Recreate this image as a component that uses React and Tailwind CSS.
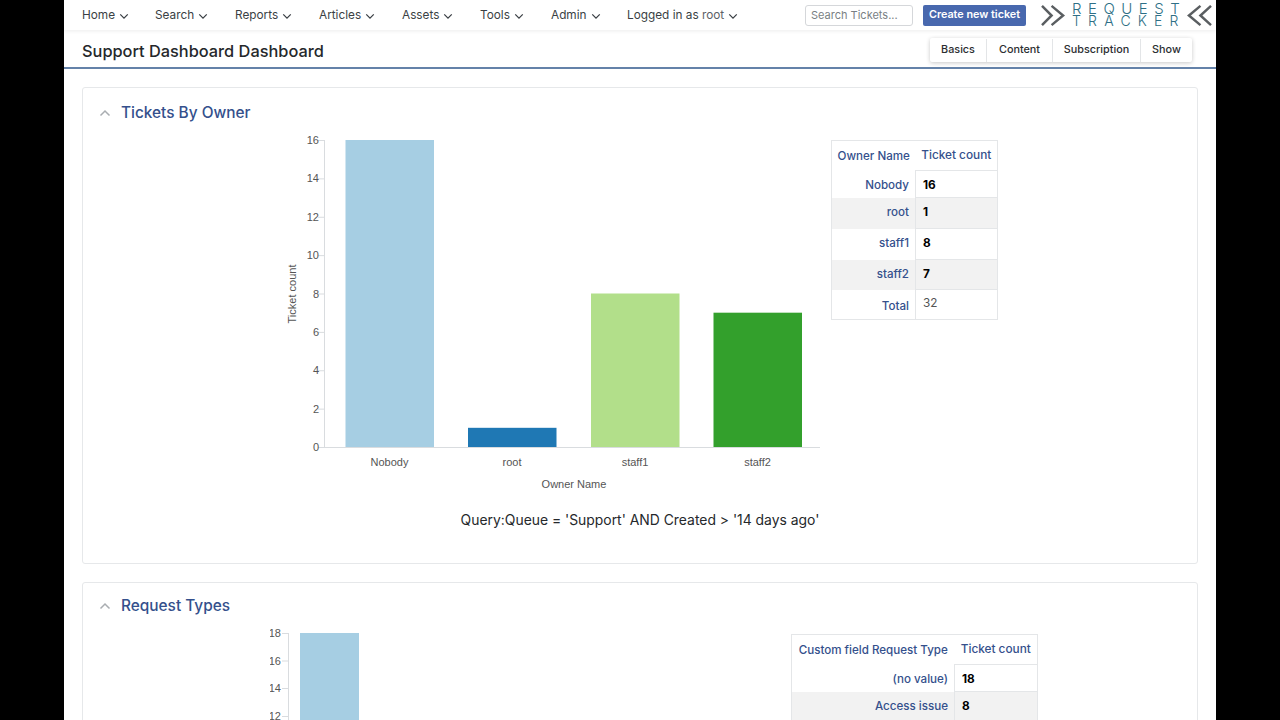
import React from "react";

const Chevron = ({ up, className }) => (
  <svg viewBox="0 0 12 8" className={className} fill="none" stroke="currentColor" strokeWidth="1.5">
    <path d={up ? "M1.5 6.5 6 2l4.5 4.5" : "M1.5 1.5 6 6l4.5-4.5"} />
  </svg>
);

const NAV = [
  ["Home", "w-[73px]"],
  ["Search", "w-[80px]"],
  ["Reports", "w-[84px]"],
  ["Articles", "w-[83px]"],
  ["Assets", "w-[78px]"],
  ["Tools", "w-[71px]"],
  ["Admin", "w-[76px]"],
];

const Logo = () => (
  <div className="flex items-center gap-[6px] ml-[15px] h-[30px]">
    <svg viewBox="0 0 26 24" className="w-[25px] h-[23px]" fill="none" stroke="#5a5e61" strokeWidth="2.6">
      <path d="M1 2l10 10L1 22M11 2l12 10-12 10" />
    </svg>
    <div className="flex flex-col text-[#2e6f86] leading-none font-light">
      <span className="text-[15px] h-[12px] leading-[12px] tracking-[6.5px] whitespace-nowrap">REQUEST</span>
      <span className="text-[14px] h-[12px] leading-[12px] tracking-[7.2px] whitespace-nowrap">TRACKER</span>
    </div>
    <svg viewBox="0 0 26 24" className="w-[25px] h-[23px] -ml-[5px]" fill="none" stroke="#5a5e61" strokeWidth="2.6">
      <path d="M14 2L2 12l12 10M25 2L14 12l11 10" />
    </svg>
  </div>
);

const TICK = "#d9dcdf";

function OwnerChart() {
  const ticks = [0, 2, 4, 6, 8, 10, 12, 14, 16];
  const y0 = 317, h = 307;
  const bars = [
    ["Nobody", 16, "#a6cee3", 65.5],
    ["root", 1, "#1f78b4", 188],
    ["staff1", 8, "#b2df8a", 311],
    ["staff2", 7, "#33a02c", 433.5],
  ];
  return (
    <svg width="550" height="370" viewBox="0 0 550 370" className="block shrink-0" fontFamily="'Liberation Sans', sans-serif">
      <line x1="44.5" y1="10" x2="44.5" y2={y0} stroke={TICK} />
      <line x1="38" y1={y0 + 0.5} x2="540" y2={y0 + 0.5} stroke={TICK} />
      {ticks.map((t) => {
        const y = y0 - (t / 16) * h;
        return (
          <g key={t}>
            <line x1="38" x2="44" y1={y + 0.5} y2={y + 0.5} stroke={TICK} />
            <text x="39" y={y + 4} textAnchor="end" fontSize="11" fill="#555">{t}</text>
          </g>
        );
      })}
      {bars.map(([n, v, c, x]) => (
        <g key={n}>
          <rect x={x} y={y0 - (v / 16) * h} width="88.5" height={(v / 16) * h} fill={c} />
          <text x={x + 44} y="336" textAnchor="middle" fontSize="11" fill="#555">{n}</text>
        </g>
      ))}
      <text x="294" y="358" textAnchor="middle" fontSize="11" fill="#555">Owner Name</text>
      <text transform="translate(16 164) rotate(-90)" textAnchor="middle" fontSize="11" fill="#555">Ticket count</text>
    </svg>
  );
}

function TypesChart() {
  const rows = [[18, 11], [16, 38.5], [14, 66], [12, 94]];
  return (
    <svg width="120" height="102" viewBox="0 0 120 102" className="block shrink-0" fontFamily="'Liberation Sans', sans-serif">
      <line x1="18.5" y1="11" x2="18.5" y2="102" stroke={TICK} />
      {rows.map(([t, y]) => (
        <g key={t}>
          <line x1="12" x2="18" y1={y + 0.5} y2={y + 0.5} stroke={TICK} />
          <text x="11" y={y + 4} textAnchor="end" fontSize="11" fill="#555">{t}</text>
        </g>
      ))}
      <rect x="30" y="11" width="59" height="91" fill="#a6cee3" />
    </svg>
  );
}

const CELL = "border border-[#e4e6e8]";
const LABEL = "text-[#34508c] font-medium text-right align-middle pr-[6px] pl-[6px] text-[11.6px]";

function DataTable({ firstHead, rows, total, col1, col2, heights }) {
  return (
    <table className="border-collapse table-fixed text-[12px] shrink-0" style={{ width: col1 + col2 }}>
      <colgroup>
        <col style={{ width: col1 }} />
        <col style={{ width: col2 }} />
      </colgroup>
      <tbody>
        <tr className="h-[30px]">
          <th className={`${CELL} border-b-0 border-r-0 text-[#34508c] font-medium text-center text-[11.6px] whitespace-nowrap pt-[2px]`}>{firstHead}</th>
          <th className={`${CELL} border-l-0 text-[#34508c] font-medium text-center text-[11.8px] whitespace-nowrap`}>Ticket count</th>
        </tr>
        {rows.map(([k, v], i) => (
          <tr key={k} className={i % 2 ? "bg-[#f2f2f2]" : ""} style={{ height: heights[i] }}>
            <td className={`${CELL} border-y-0 ${LABEL} ${i === 0 ? "pt-[4px]" : ""}`}>{k}</td>
            <td className={`${CELL} pl-[7px] font-bold text-black text-[11.8px] ${i === 0 ? "pt-[3px]" : ""}`}>{v}</td>
          </tr>
        ))}
        {total !== undefined && (
          <tr className="h-[30px]">
            <td className={`${CELL} border-t-0 ${LABEL} pt-[5px]`}>Total</td>
            <td className={`${CELL} pl-[7px] text-[#555] text-[11.8px] pb-[1px]`}>{total}</td>
          </tr>
        )}
      </tbody>
    </table>
  );
}

const CardHead = ({ title }) => (
  <div className="flex items-center h-[24px]">
    <Chevron up className="w-[12px] h-[8px] text-[#a9adb1] ml-[16px]" />
    <h2 className="ml-[10px] text-[15.4px] font-medium text-[#34508c] leading-none">{title}</h2>
  </div>
);

export default function App() {
  return (
    <div className="w-[1280px] h-[720px] overflow-hidden bg-black flex justify-center font-['Inter','Liberation_Sans',sans-serif]">
      <div className="w-[1152px] h-[720px] bg-white overflow-hidden flex flex-col">
        <header className="h-[30px] shrink-0 flex items-center pl-[18px] pr-[3px] text-[#3a3f44] text-[11.8px] shadow-[0_1px_4px_rgba(0,0,0,0.08)] relative">
          {NAV.map(([n, w]) => (
            <div key={n} className={`${w} flex items-center gap-[4px] pt-[2px]`}>
              <span>{n}</span>
              <Chevron className="w-[10px] h-[7px] mt-[1px]" />
            </div>
          ))}
          <div className="flex items-center gap-[4px] w-[178px] pt-[2px]">
            <span>Logged in as <span className="text-[#5c6166]">root</span></span>
            <Chevron className="w-[10px] h-[7px] mt-[1px]" />
          </div>
          <input readOnly placeholder="Search Tickets..." className="w-[108px] h-[21px] border border-[#d5d7da] rounded-[3px] px-[5px] text-[11px] text-[#555] placeholder:text-[#7a7f84] outline-none" />
          <button className="ml-[10px] w-[103px] h-[21px] bg-[#4868ae] text-white text-[10.8px] font-semibold rounded-[2px] whitespace-nowrap">Create new ticket</button>
          <Logo />
        </header>

        <div className="h-[39px] shrink-0 flex items-center justify-between pl-[18px] pr-[24px] border-b-2 border-[#6482a9]">
          <h1 className="text-[16.35px] font-medium text-[#25282b] leading-none mt-[5px]">Support Dashboard Dashboard</h1>
          <div className="flex h-[24px] pt-[1px] rounded-[2px] shadow-[0_1px_4px_rgba(0,0,0,0.22)] text-[10.8px] font-medium text-[#2b2e31] mt-[3px]">
            <span className="w-[57px] flex items-center justify-center border-r border-[#e3e5e7]">Basics</span>
            <span className="w-[66px] flex items-center justify-center border-r border-[#e3e5e7]">Content</span>
            <span className="w-[88px] flex items-center justify-center border-r border-[#e3e5e7]">Subscription</span>
            <span className="w-[51px] flex items-center justify-center">Show</span>
          </div>
        </div>

        <main className="flex-1 min-h-0 overflow-hidden px-[18px] pt-[18px] flex flex-col gap-[18px]">
          <section className="h-[477px] shrink-0 border border-[#e6e8ea] rounded-[3px] pt-[13px]">
            <CardHead title="Tickets By Owner" />
            <div className="flex items-start pl-[197px] mt-[5px]">
              <OwnerChart />
              <div className="ml-[1px] mt-[10px]">
                <DataTable firstHead="Owner Name" col1={84} col2={82} heights={[27, 31, 31, 30]} total="32"
                  rows={[["Nobody", "16"], ["root", "1"], ["staff1", "8"], ["staff2", "7"]]} />
              </div>
            </div>
            <p className="text-center text-[13.9px] text-[#25282b] mt-[10px]">Query:Queue = 'Support' AND Created &gt; '14 days ago'</p>
          </section>
          <section className="h-[200px] shrink-0 border border-[#e6e8ea] rounded-[3px] pt-[11px]">
            <CardHead title="Request Types" />
            <div className="flex items-start pl-[187px] mt-[4px]">
              <TypesChart />
              <div className="ml-[401px] mt-[12px]">
                <DataTable firstHead="Custom field Request Type" col1={163} col2={83} heights={[27, 31]}
                  rows={[["(no value)", "18"], ["Access issue", "8"]]} />
              </div>
            </div>
          </section>
        </main>
      </div>
    </div>
  );
}
